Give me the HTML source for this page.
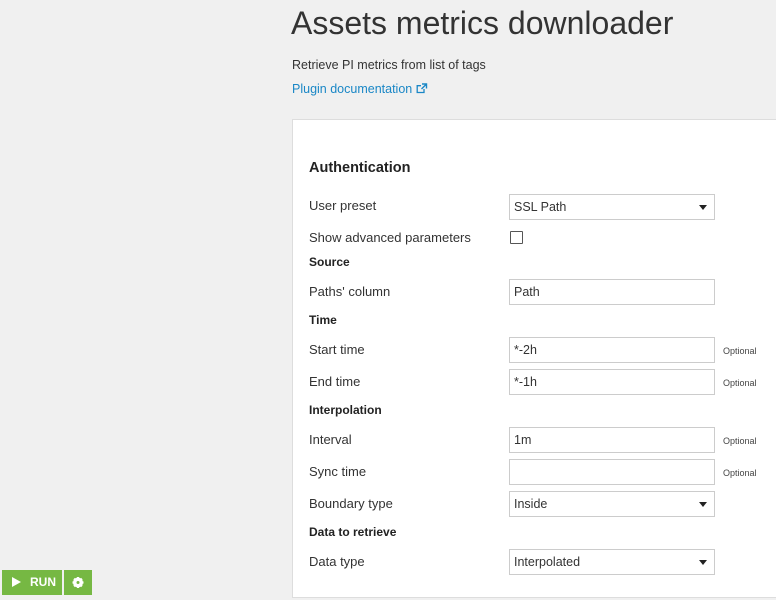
<!DOCTYPE html><html><head><style>
body{margin:0;width:776px;height:598px;background:#f0f0f0;font-family:"Liberation Sans",sans-serif;color:#333;position:relative;overflow:hidden}
.a{position:absolute;white-space:nowrap}
h1{position:absolute;left:291px;top:5px;margin:0;font-weight:400;font-size:32px;color:#333;letter-spacing:0}
.panel{position:absolute;left:292px;top:119px;width:490px;height:477px;background:#fff;border:1px solid #ddd}
.l{position:absolute;left:309px;font-size:13px;color:#333}
.b{position:absolute;left:309px;font-size:12px;font-weight:bold;color:#222}
.in{position:absolute;left:509px;height:24px;border:1px solid #ccc;background:#fff;font-size:12.5px;line-height:25px;padding-left:4px;box-sizing:content-box;width:200px}
.sel::after{content:"";position:absolute;right:7px;top:10px;border-left:4px solid transparent;border-right:4px solid transparent;border-top:5px solid #222}
.o{position:absolute;left:723px;font-size:9px;color:#444}
</style></head><body>
<h1>Assets metrics downloader</h1>
<div class="a" style="left:292px;top:58px;font-size:12.5px">Retrieve PI metrics from list of tags</div>
<div class="a" style="left:292px;top:82px;font-size:12.5px;color:#1a87c6">Plugin documentation <svg width="12" height="11" viewBox="0 0 12 11" style="vertical-align:-1px"><path d="M8 6v3.5H1.2V2.7H5" fill="none" stroke="#1a87c6" stroke-width="1.3"/><path d="M6 1h4.5v4.5M10.5 1L5.5 6" fill="none" stroke="#1a87c6" stroke-width="1.4"/></svg></div>
<div class="panel"></div>
<div class="a b" style="top:160px;font-size:14.5px">Authentication</div>
<div class="l" style="top:198px">User preset</div><div class="in sel" style="top:194px">SSL Path</div>
<div class="l" style="top:230px">Show advanced parameters</div><div class="a" style="left:510px;top:231px;width:11px;height:11px;border:1px solid #555;border-radius:1px"></div>
<div class="b" style="top:255px">Source</div>
<div class="l" style="top:284px">Paths' column</div><div class="in" style="top:279px">Path</div>
<div class="b" style="top:313px">Time</div>
<div class="l" style="top:342px">Start time</div><div class="in" style="top:337px">*-2h</div><div class="o" style="top:346px">Optional</div>
<div class="l" style="top:374px">End time</div><div class="in" style="top:369px">*-1h</div><div class="o" style="top:378px">Optional</div>
<div class="b" style="top:403px">Interpolation</div>
<div class="l" style="top:432px">Interval</div><div class="in" style="top:427px">1m</div><div class="o" style="top:436px">Optional</div>
<div class="l" style="top:464px">Sync time</div><div class="in" style="top:459px"></div><div class="o" style="top:468px">Optional</div>
<div class="l" style="top:496px">Boundary type</div><div class="in sel" style="top:491px">Inside</div>
<div class="b" style="top:525px">Data to retrieve</div>
<div class="l" style="top:554px">Data type</div><div class="in sel" style="top:549px">Interpolated</div>
<div class="a" style="left:2px;top:570px;width:60px;height:25px;background:#76b843;color:#fff;font-weight:bold;font-size:12px;line-height:25px"><span style="position:absolute;left:10px;top:7px;border-top:5.5px solid transparent;border-bottom:5.5px solid transparent;border-left:9px solid #fff"></span><span style="position:absolute;left:28px">RUN</span></div>
<div class="a" style="left:64px;top:570px;width:28px;height:25px;background:#76b843"><svg width="28" height="25" viewBox="0 0 28 25"><circle cx="14" cy="12.5" r="3.8" fill="none" stroke="#fff" stroke-width="2.4"/><g stroke="#fff" stroke-width="2.2"><path d="M14 7v11M8.5 12.5h11M10.1 8.6l7.8 7.8M17.9 8.6l-7.8 7.8"/></g><circle cx="14" cy="12.5" r="1.5" fill="#76b843"/></svg></div>
</body></html>
